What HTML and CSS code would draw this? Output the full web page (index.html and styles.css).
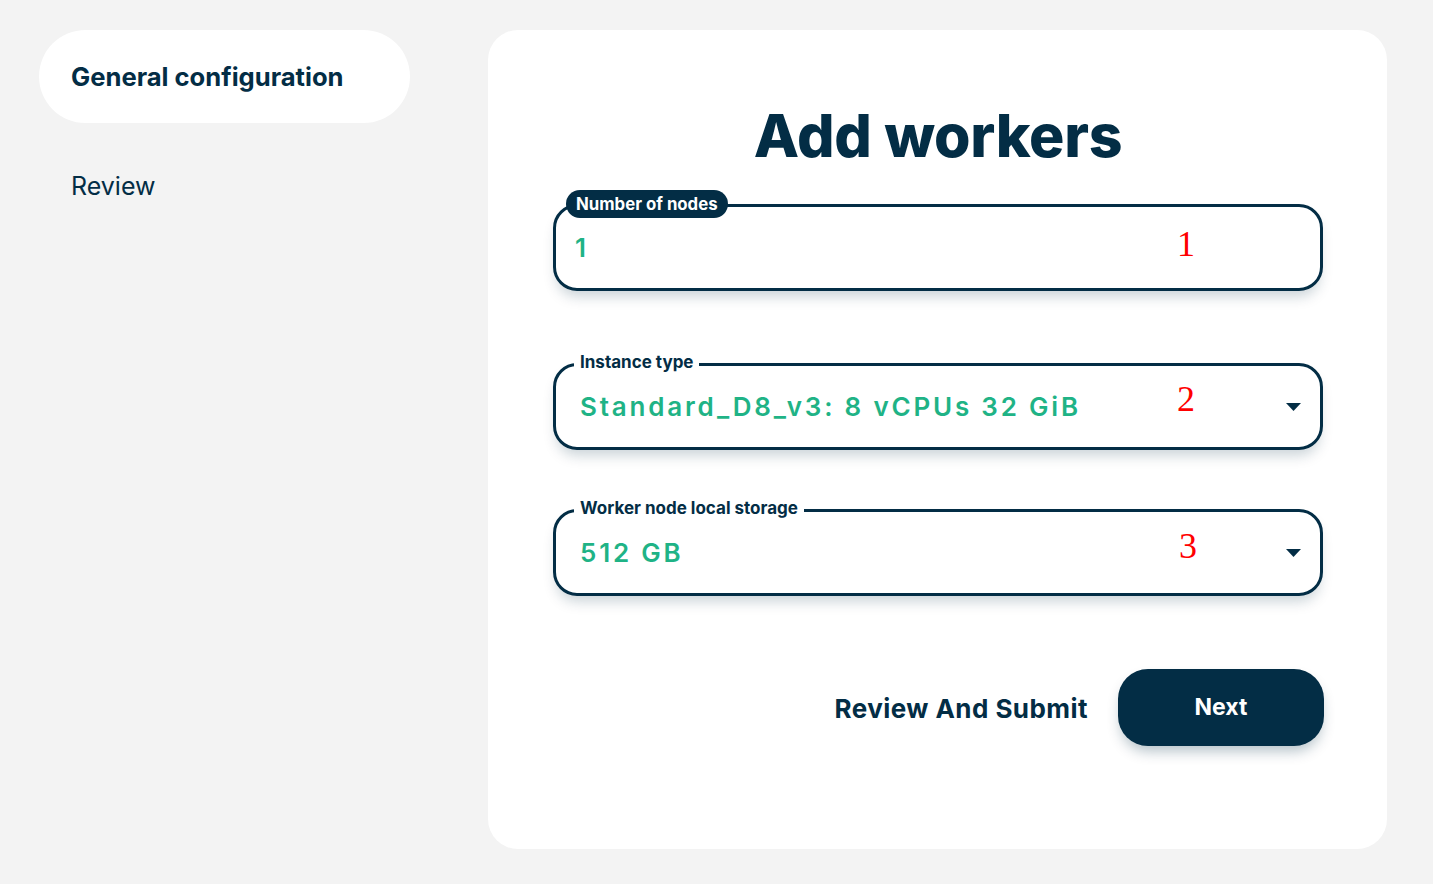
FILE: index.html
```html
<!DOCTYPE html>
<html lang="en">
<head>
<meta charset="utf-8">
<title>Add workers</title>
<link rel="stylesheet" href="styles.css">
</head>
<body>
<div class="page">
  <nav class="steps">
    <div class="step step--active">General configuration</div>
    <div class="step">Review</div>
  </nav>
  <main class="card">
    <h1 class="title">Add workers</h1>
    <div class="field field--nodes">
      <span class="field__label field__label--pill">Number of nodes</span>
      <span class="field__value field__value--plain">1</span>
      <span class="marker marker--1">1</span>
    </div>
    <div class="field field--instance">
      <span class="field__label">Instance type</span>
      <span class="field__value">Standard_D8_v3: 8 vCPUs 32 GiB</span>
      <span class="marker marker--2">2</span>
      <svg class="field__arrow" width="15" height="8" viewBox="0 0 15 8"><polygon points="0,0 15,0 7.5,8" fill="#032d45"/></svg>
    </div>
    <div class="field field--storage">
      <span class="field__label">Worker node local storage</span>
      <span class="field__value">512 GB</span>
      <span class="marker marker--3">3</span>
      <svg class="field__arrow" width="15" height="8" viewBox="0 0 15 8"><polygon points="0,0 15,0 7.5,8" fill="#032d45"/></svg>
    </div>
    <div class="actions">
      <span class="actions__link">Review And Submit</span>
      <button class="actions__next">Next</button>
    </div>
  </main>
</div>
</body>
</html>
```

FILE: styles.css
```css
* { box-sizing: border-box; }
html, body { margin: 0; padding: 0; }
body {
  background: #f3f3f3;
  font-family: Inter, "Noto Sans", sans-serif;
  color: #032d45;
}
.page {
  display: grid;
  grid-template-columns: 371px 899px;
  column-gap: 78px;
  padding: 30px 46px 35px 39px;
  height: 884px;
}
.steps {
  display: flex;
  flex-direction: column;
}
.step {
  height: 93px;
  display: flex;
  align-items: center;
  padding-left: 32px;
  font-size: 25px;
  font-weight: 400;
  border-radius: 47px;
}
.step--active {
  background: #ffffff;
  font-weight: 700;
  font-size: 25.6px;
  margin-bottom: 16px;
}
.card {
  background: #ffffff;
  border-radius: 30px;
  padding: 71px 64px 0 65px;
  display: flex;
  flex-direction: column;
}
.title {
  margin: 0 0 32px;
  text-align: center;
  font-size: 59px;
  line-height: 1.2;
  font-weight: 800;
  letter-spacing: -0.3px;
}
.field {
  position: relative;
  height: 87px;
  border: 3px solid #032d45;
  border-radius: 24px;
  display: flex;
  align-items: center;
  padding: 0 19px 0 24px;
  box-shadow: 0 9px 14px -4px rgba(3, 45, 69, 0.22);
}
.field--instance { margin-top: 72px; }
.field--storage { margin-top: 59px; }
.field__label {
  position: absolute;
  left: 18px;
  top: -14px;
  background: #ffffff;
  padding: 0 6px;
  font-size: 17px;
  font-weight: 700;
  line-height: 20px;
}
.field__label--pill {
  left: 10px;
  top: -17px;
  background: #032d45;
  color: #ffffff;
  border-radius: 14px;
  line-height: 28px;
  padding: 0 10px;
  font-size: 16.8px;
}
.field__value {
  flex: 1;
  font-size: 26px;
  font-weight: 600;
  color: #1fb386;
  letter-spacing: 2.8px;
  padding-top: 1px;
}
.field__value--plain {
  margin-left: -5px;
}
.field__arrow { flex: none; margin-top: 2px; }
.marker {
  position: absolute;
  font-family: "Liberation Serif", serif;
  font-size: 36px;
  line-height: 1;
  color: #ff0000;
  left: 621px;
}
.marker--1 { top: 19px; }
.marker--2 { top: 15px; }
.marker--3 { top: 16px; left: 623px; }
.actions {
  margin-top: 73px;
  display: flex;
  justify-content: flex-end;
  align-items: center;
  gap: 30px;
}
.actions__link {
  font-size: 26px;
  font-weight: 700;
  letter-spacing: 0.45px;
  padding-top: 3px;
}
.actions__next {
  width: 206px;
  height: 77px;
  border: none;
  border-radius: 30px;
  background: #032d45;
  color: #ffffff;
  font-family: Inter, "Noto Sans", sans-serif;
  font-size: 23px;
  font-weight: 700;
  box-shadow: 0 8px 14px -3px rgba(3, 45, 69, 0.3);
  margin-right: -1px;
}
```
